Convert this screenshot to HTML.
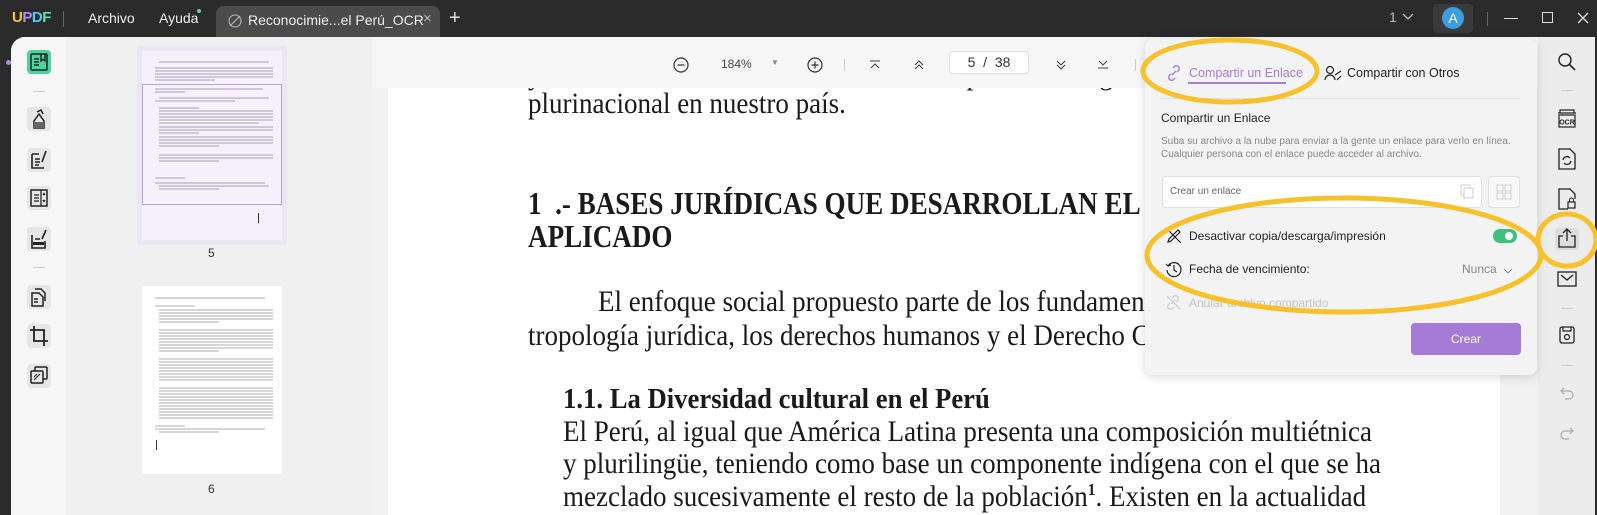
<!DOCTYPE html>
<html><head><meta charset="utf-8"><style>
*{margin:0;padding:0;box-sizing:border-box}
body{width:1597px;height:515px;overflow:hidden;background:#2b2b2b;font-family:"Liberation Sans",sans-serif;position:relative}
.a{position:absolute}
.ser{font-family:"Liberation Serif",serif;color:#1a1a1a;white-space:nowrap;transform-origin:left top;line-height:32px}
svg{position:absolute;overflow:visible}
</style></head><body>
<!-- top bar -->
<div class="a" style="left:12px;top:9px;font-weight:bold;font-size:15px;color:#fff;letter-spacing:-.5px"><span style="color:#f6c544">U</span><span style="color:#b38cf0">P</span><span style="color:#5cc9f5">D</span><span style="color:#6ee0a0">F</span></div>
<div class="a" style="left:63px;top:11px;width:1px;height:16px;background:#666"></div>
<div class="a" style="left:88px;top:10px;font-size:14px;color:#eee">Archivo</div>
<div class="a" style="left:159px;top:10px;font-size:14px;color:#eee">Ayuda</div>
<div class="a" style="left:197px;top:9px;width:4px;height:4px;border-radius:50%;background:#5fd4a6"></div>
<div class="a" style="left:216px;top:6px;width:224px;height:31px;background:#4b4b4b;border-radius:8px 8px 0 0"></div>
<svg style="left:227px;top:13px" width="16" height="16"><circle cx="8" cy="8" r="6" fill="none" stroke="#bbb"/><line x1="3" y1="13" x2="13" y2="3" stroke="#bbb"/></svg>
<div class="a" style="left:248px;top:12px;font-size:14px;color:#eee">Reconocimie...el Perú_OCR</div>
<div class="a" style="left:423px;top:10px;font-size:15px;color:#bbb">×</div>
<div class="a" style="left:449px;top:7px;font-size:20px;color:#ddd">+</div>
<div class="a" style="left:1389px;top:9px;font-size:14px;color:#bbb">1</div>
<svg style="left:1402px;top:13px" width="12" height="8"><path d="M1 1 L6 6 L11 1" fill="none" stroke="#bbb" stroke-width="1.3"/></svg>
<div class="a" style="left:1433px;top:4px;width:40px;height:29px;background:#3a3a3a;border-radius:4px"></div>
<div class="a" style="left:1442px;top:7px;width:22px;height:22px;border-radius:50%;background:#3c9ee2;color:#fff;font-size:14px;text-align:center;line-height:22px">A</div>
<div class="a" style="left:1487px;top:12px;width:1px;height:14px;background:#666"></div>
<div class="a" style="left:1504px;top:18px;width:14px;height:1px;background:#ddd"></div>
<div class="a" style="left:1542px;top:12px;width:11px;height:11px;border:1.3px solid #ddd"></div>
<svg style="left:1577px;top:12px" width="12" height="12"><path d="M1 1L11 11M11 1L1 11" stroke="#ddd" stroke-width="1.3"/></svg>

<!-- main area -->
<div class="a" style="left:11px;top:37px;width:1584px;height:478px;background:#f0f0f0;border-radius:14px 14px 0 0"></div>
<div class="a" style="left:11px;top:37px;width:55px;height:478px;background:#f6f6f6;border-radius:14px 0 0 0"></div>
<div class="a" style="left:6px;top:60px;width:5px;height:5px;border-radius:50%;background:#a98ee0"></div>
<!-- left rail icons -->
<div class="a" style="left:27px;top:50px;width:24px;height:24px;border-radius:4px;background:#4fd39c"></div>
<svg style="left:30px;top:53px" width="18" height="18"><rect x="1" y="1" width="16" height="16" rx="1" fill="none" stroke="#222" stroke-width="1.5"/><path d="M4 6h5M4 9h5M4 12h5M11 1v7l2-1.5 2 1.5V1" stroke="#222" stroke-width="1.4" fill="none"/></svg>
<div class="a" style="left:33px;top:91px;width:12px;height:1px;background:#ccc"></div>
<div class="a" style="left:33px;top:267px;width:12px;height:1px;background:#ccc"></div>
<div class="a" style="left:27px;top:107px;width:24px;height:24px;border-radius:4px;background:#e6e6e6"></div>
<svg style="left:31px;top:109px" width="16" height="20"><path d="M3 19V12L8 5L13 12V19Z M6 3L10 1L12 5" fill="none" stroke="#222" stroke-width="1.5"/><rect x="3" y="13" width="10" height="6" fill="#666"/></svg>
<div class="a" style="left:27px;top:148px;width:24px;height:24px;border-radius:4px;background:#e6e6e6"></div>
<svg style="left:30px;top:149px" width="18" height="20"><path d="M2 5V19H14M2 5H9M5 10h5M5 13h5M5 16h4M12 13L16 2" fill="none" stroke="#222" stroke-width="1.6"/></svg>
<div class="a" style="left:27px;top:186px;width:24px;height:24px;border-radius:4px;background:#e6e6e6"></div>
<svg style="left:30px;top:189px" width="18" height="18"><rect x="1" y="1" width="16" height="16" fill="none" stroke="#222" stroke-width="1.5"/><path d="M4 6h5M4 9h5M4 12h5M11 1v16M13 6l1-1.5 1 1.5M13 11l1 1.5 1-1.5" stroke="#222" stroke-width="1.3" fill="none"/></svg>
<div class="a" style="left:27px;top:227px;width:24px;height:24px;border-radius:4px;background:#e6e6e6"></div>
<svg style="left:30px;top:229px" width="18" height="20"><path d="M2 6V19H15V12M5 10h5M12 10L16 1" fill="none" stroke="#222" stroke-width="1.6"/><rect x="3" y="13" width="11" height="3" fill="#222"/></svg>
<div class="a" style="left:27px;top:285px;width:24px;height:24px;border-radius:4px;background:#e6e6e6"></div>
<svg style="left:30px;top:287px" width="18" height="20"><path d="M5 2H11L15 6V14M2 6H9L13 10V19H2Z M4 12h4M4 15h4" fill="none" stroke="#222" stroke-width="1.5"/></svg>
<div class="a" style="left:27px;top:324px;width:24px;height:24px;border-radius:4px;background:#e6e6e6"></div>
<svg style="left:29px;top:325px" width="20" height="22"><path d="M5 1V16H19M1 5H15V21" fill="none" stroke="#222" stroke-width="1.8"/></svg>
<div class="a" style="left:27px;top:364px;width:24px;height:24px;border-radius:4px;background:#e6e6e6"></div>
<svg style="left:30px;top:366px" width="18" height="18"><rect x="5" y="1" width="12" height="12" rx="1" fill="none" stroke="#222" stroke-width="1.5"/><rect x="1" y="5" width="12" height="12" rx="1" fill="#e6e6e6" stroke="#222" stroke-width="1.5"/><path d="M4 14l6-6M4 11l3-3" stroke="#222"/></svg>

<!-- thumbnails -->
<div class="a" style="left:137px;top:46px;width:150px;height:199px;background:#ebe6f3;border-radius:3px"></div>
<div class="a" style="left:142px;top:51px;width:140px;height:189px;background:#f6f0fd"></div>
<div class="a" style="left:142px;top:84px;width:140px;height:121px;border:1px solid #b9a3d6"></div>
<div class="a" style="left:208px;top:246px;font-size:12px;color:#333">5</div>
<div class="a" style="left:142px;top:286px;width:140px;height:188px;background:#fff"></div>
<div class="a" style="left:208px;top:482px;font-size:12px;color:#333">6</div>
<svg style="left:155px;top:58px" width="120" height="420">
<g stroke="#b8b0c4" stroke-width="1.3">
<path d="M4 4h110M0 10h118M0 13h118M0 16h118M0 19h118M0 22h60"/>
<path d="M0 31h108M0 34h30"/>
<path d="M4 40h110M0 43h80"/>
<path d="M4 50h40M4 53h114M4 56h114M4 59h114M4 62h114M4 65h100M4 69h114M4 72h114M4 75h40"/>
<path d="M4 79h114M4 82h114M4 85h114M4 88h60"/>
<path d="M4 97h114M4 100h114M4 103h60"/>
<path d="M0 120h30M0 125h110M4 128h110M4 131h60"/>
</g>
<g stroke="#bdbdbd" stroke-width="1.3">
<path d="M0 240h110M0 248h40M4 252h114M4 255h114M4 258h114M4 261h114M4 264h60"/>
<path d="M4 272h114M4 275h114M4 278h114M4 281h114M4 284h114M4 287h114M4 290h114M4 293h60"/>
<path d="M4 301h114M4 304h114M4 307h114M4 310h114M4 313h114M4 316h114M4 319h114M4 322h114"/>
<path d="M4 330h114M4 333h114M4 336h114M4 339h114M4 342h114M4 345h114M4 348h114M4 351h114M4 354h114M4 357h114M4 360h114"/>
<path d="M0 368h30M0 371h110M4 374h60"/>
</g>
<rect x="1" y="382" width="1" height="10" fill="#333"/>
<rect x="103" y="155" width="1" height="10" fill="#333"/>
</svg>

<!-- doc area -->
<div class="a" style="left:372px;top:37px;width:1166px;height:478px;background:#f1f1f1"></div>
<div class="a" style="left:388px;top:88px;width:1112px;height:427px;background:#fff"></div>
<!-- page text -->
<div class="a" style="left:388px;top:88px;width:1112px;height:427px;overflow:hidden">
<div class="a ser" style="left:140px;top:-29px;font-size:30px;transform:scaleX(.9)">y reconocimiento de los derechos de los pueblos indígenas para</div>
<div class="a ser" style="left:140px;top:0px;font-size:30px;transform:scaleX(.9)">plurinacional en nuestro país.</div>
<div class="a ser" style="left:140px;top:100px;font-size:31.5px;font-weight:bold;transform:scaleX(.86)">1&nbsp; .- BASES JURÍDICAS QUE DESARROLLAN EL ENFOQUE SOCIAL</div>
<div class="a ser" style="left:140px;top:133px;font-size:31.5px;font-weight:bold;transform:scaleX(.86)">APLICADO</div>
<div class="a ser" style="left:210px;top:198px;font-size:30px;transform:scaleX(.9)">El enfoque social propuesto parte de los fundamentos teóricos de la an-</div>
<div class="a ser" style="left:140px;top:232px;font-size:30px;transform:scaleX(.9)">tropología jurídica, los derechos humanos y el Derecho Constitucional.</div>
<div class="a ser" style="left:175px;top:295px;font-size:29px;font-weight:bold;transform:scaleX(.92)">1.1. La Diversidad cultural en el Perú</div>
<div class="a ser" style="left:175px;top:328px;font-size:30px;transform:scaleX(.9)">El Perú, al igual que América Latina presenta una composición multiétnica</div>
<div class="a ser" style="left:175px;top:360px;font-size:30px;transform:scaleX(.9)">y plurilingüe, teniendo como base un componente indígena con el que se ha</div>
<div class="a ser" style="left:175px;top:393px;font-size:30px;transform:scaleX(.9)">mezclado sucesivamente el resto de la población<sup style="font-size:17px;font-weight:bold;line-height:0">1</sup>. Existen en la actualidad</div>
</div>
<!-- toolbar -->
<div class="a" style="left:372px;top:37px;width:1166px;height:51px;background:#f6f6f6"></div>
<svg style="left:673px;top:57px" width="16" height="16"><circle cx="8" cy="8" r="7" fill="none" stroke="#333" stroke-width="1.2"/><path d="M4.5 8h7" stroke="#333" stroke-width="1.2"/></svg>
<div class="a" style="left:721px;top:57px;font-size:12px;color:#444">184%</div>
<div class="a" style="left:771px;top:58px;font-size:8px;color:#888">▼</div>
<svg style="left:807px;top:57px" width="16" height="16"><circle cx="8" cy="8" r="7" fill="none" stroke="#333" stroke-width="1.2"/><path d="M4.5 8h7M8 4.5v7" stroke="#333" stroke-width="1.2"/></svg>
<div class="a" style="left:844px;top:59px;width:1px;height:12px;background:#ccc"></div>
<svg style="left:869px;top:60px" width="12" height="10"><path d="M1 1h10M2 8l4-4 4 4" fill="none" stroke="#444" stroke-width="1.1"/></svg>
<svg style="left:913px;top:59px" width="12" height="12"><path d="M2 6l4-4 4 4M2 10l4-4 4 4" fill="none" stroke="#444" stroke-width="1.1"/></svg>
<div class="a" style="left:949px;top:51px;width:80px;height:23px;background:#fff;border:1px solid #ddd;border-radius:4px;font-size:14px;color:#333;text-align:center;line-height:21px">5&nbsp; /&nbsp; 38</div>
<svg style="left:1055px;top:59px" width="12" height="12"><path d="M2 2l4 4 4-4M2 6l4 4 4-4" fill="none" stroke="#444" stroke-width="1.1"/></svg>
<svg style="left:1097px;top:60px" width="12" height="10"><path d="M2 1l4 4 4-4M1 8h10" fill="none" stroke="#444" stroke-width="1.1"/></svg>
<div class="a" style="left:1135px;top:59px;width:1px;height:12px;background:#ccc"></div>

<!-- right rail -->
<div class="a" style="left:1538px;top:37px;width:57px;height:478px;background:#ececec"></div>
<svg style="left:1558px;top:53px" width="18" height="18"><circle cx="7" cy="7" r="6" fill="none" stroke="#222" stroke-width="1.4"/><path d="M11.5 11.5L17 17" stroke="#222" stroke-width="1.6"/></svg>
<div class="a" style="left:1561px;top:90px;width:12px;height:1px;background:#ccc"></div>
<svg style="left:1557px;top:109px" width="20" height="20"><path d="M1 4h18M3 4V1h14v3" fill="none" stroke="#222" stroke-width="1.2"/><rect x="2" y="6" width="16" height="12" fill="none" stroke="#222" stroke-width="1.2"/><text x="10" y="15.5" font-size="7" text-anchor="middle" font-family="Liberation Sans" font-weight="bold" fill="#222">OCR</text></svg>
<svg style="left:1558px;top:148px" width="18" height="22"><path d="M1 1H12L17 6V21H1Z" fill="none" stroke="#222" stroke-width="1.3"/><path d="M5 12a4 4 0 0 1 7-2M13 13a4 4 0 0 1-7 2" fill="none" stroke="#222" stroke-width="1.3"/></svg>
<svg style="left:1558px;top:188px" width="18" height="22"><path d="M10 21H1V1H12L17 6V11" fill="none" stroke="#222" stroke-width="1.3"/><rect x="10" y="14" width="7" height="6" fill="none" stroke="#222" stroke-width="1.2"/><path d="M11.5 14v-2a2 2 0 0 1 4 0v2" fill="none" stroke="#222"/></svg>
<div class="a" style="left:1555px;top:228px;width:24px;height:22px;background:#dcdcdc;border-radius:4px"></div>
<svg style="left:1557px;top:228px" width="20" height="20"><path d="M6 8H2V19H18V8H14M10 13V1M6 5l4-4 4 4" fill="none" stroke="#222" stroke-width="1.3"/></svg>
<svg style="left:1557px;top:271px" width="20" height="16"><rect x="1" y="1" width="18" height="14" fill="none" stroke="#222" stroke-width="1.3"/><path d="M4 4l6 5 6-5" fill="none" stroke="#222" stroke-width="1.3"/></svg>
<div class="a" style="left:1561px;top:308px;width:12px;height:1px;background:#ccc"></div>
<svg style="left:1559px;top:326px" width="16" height="18"><rect x="1" y="1" width="14" height="16" rx="2" fill="none" stroke="#222" stroke-width="1.3"/><path d="M4 1v4h8V1" fill="none" stroke="#222" stroke-width="1.2"/><circle cx="8" cy="11" r="2.5" fill="none" stroke="#222" stroke-width="1.2"/></svg>
<div class="a" style="left:1561px;top:365px;width:12px;height:1px;background:#ccc"></div>
<svg style="left:1560px;top:387px" width="14" height="12"><path d="M4 1L1 4l3 3M1 4h8a4 4 0 0 1 0 8H5" fill="none" stroke="#aaa" stroke-width="1.2"/></svg>
<svg style="left:1560px;top:427px" width="14" height="12"><path d="M10 1l3 3-3 3M13 4H5a4 4 0 0 0 0 8h4" fill="none" stroke="#aaa" stroke-width="1.2"/></svg>
<div class="a" style="left:1595px;top:37px;width:2px;height:478px;background:#2b2b2b"></div>

<!-- popup -->
<div class="a" style="left:1145px;top:39px;width:392px;height:336px;background:#f3f3f3;border-radius:8px;box-shadow:0 2px 10px rgba(0,0,0,.15)"></div>
<svg style="left:1166px;top:65px" width="16" height="16"><path d="M6 10l4-4M7 3l2-2a3 3 0 0 1 4 4l-2 2M9 13l-2 2a3 3 0 0 1-4-4l2-2" fill="none" stroke="#a77fd6" stroke-width="1.4"/></svg>
<div class="a" style="left:1189px;top:66px;font-size:12.5px;color:#a77fd6">Compartir un Enlace</div>
<div class="a" style="left:1188px;top:82px;width:98px;height:2px;background:#a77fd6"></div>
<svg style="left:1324px;top:65px" width="18" height="16"><circle cx="6" cy="5" r="3.5" fill="none" stroke="#222" stroke-width="1.2"/><path d="M1 15a5 5 0 0 1 10 0M11 10l6-4M13 15l4-4" fill="none" stroke="#222" stroke-width="1.2"/></svg>
<div class="a" style="left:1347px;top:66px;font-size:12.5px;color:#222">Compartir con Otros</div>
<div class="a" style="left:1160px;top:98px;width:360px;height:1px;background:#e0e0e0"></div>
<div class="a" style="left:1161px;top:111px;font-size:12px;color:#222">Compartir un Enlace</div>
<div class="a" style="left:1161px;top:135px;font-size:10px;color:#888;line-height:13px">Suba su archivo a la nube para enviar a la gente un enlace para verlo en línea.<br>Cualquier persona con el enlace puede acceder al archivo.</div>
<div class="a" style="left:1162px;top:176px;width:320px;height:32px;background:#fff;border:1px solid #e0e0e0;border-radius:4px"></div>
<div class="a" style="left:1170px;top:186px;font-size:10px;color:#666">Crear un enlace</div>
<svg style="left:1460px;top:184px" width="14" height="15"><rect x="1" y="1" width="9" height="10" rx="1" fill="none" stroke="#ccc"/><rect x="4" y="4" width="9" height="10" rx="1" fill="#fff" stroke="#ccc"/></svg>
<div class="a" style="left:1488px;top:176px;width:32px;height:32px;background:#f7f7f7;border:1px solid #e0e0e0;border-radius:4px"></div>
<svg style="left:1496px;top:184px" width="16" height="16"><g fill="none" stroke="#ccc"><rect x="1" y="1" width="6" height="6"/><rect x="9" y="1" width="6" height="6"/><rect x="1" y="9" width="6" height="6"/><rect x="9" y="9" width="6" height="6"/></g></svg>
<svg style="left:1166px;top:228px" width="16" height="16"><path d="M2 14l3-1 9-9-2-2-9 9zM1 1l14 14" fill="none" stroke="#222" stroke-width="1.2"/></svg>
<div class="a" style="left:1189px;top:229px;font-size:12px;color:#222">Desactivar copia/descarga/impresión</div>
<div class="a" style="left:1493px;top:229px;width:24px;height:14px;border-radius:7px;background:#40bf7d"></div>
<div class="a" style="left:1505px;top:232px;width:8px;height:8px;border-radius:50%;background:#fff"></div>
<svg style="left:1165px;top:261px" width="17" height="16"><path d="M3 5a7 7 0 1 1-1 4M1 3l2 2 3-1M9 4v5l3 2" fill="none" stroke="#222" stroke-width="1.2"/></svg>
<div class="a" style="left:1189px;top:262px;font-size:12px;color:#222">Fecha de vencimiento:</div>
<div class="a" style="left:1462px;top:262px;font-size:12px;color:#888">Nunca</div>
<svg style="left:1503px;top:268px" width="10" height="6"><path d="M1 1l4 4 4-4" fill="none" stroke="#888"/></svg>
<svg style="left:1166px;top:295px" width="15" height="15"><path d="M5 9l4-4M6 3l2-2a3 3 0 0 1 4 4l-2 2M8 12l-2 2a3 3 0 0 1-4-4l2-2M1 1l13 13" fill="none" stroke="#ccc" stroke-width="1.2"/></svg>
<div class="a" style="left:1189px;top:296px;font-size:12px;color:#c4c4c4">Anular archivo compartido</div>
<div class="a" style="left:1411px;top:323px;width:110px;height:32px;border-radius:4px;background:#a67bd8;color:#fff;font-size:12px;text-align:center;line-height:32px">Crear</div>

<!-- annotations -->
<svg style="left:0;top:0" width="1597" height="515">
<g fill="none" stroke="#f7c12c" stroke-width="5">
<ellipse cx="1230" cy="71" rx="87" ry="31"/>
<ellipse cx="1344" cy="255" rx="197" ry="57"/>
<ellipse cx="1567" cy="240" rx="29" ry="26"/>
</g></svg>
</body></html>
